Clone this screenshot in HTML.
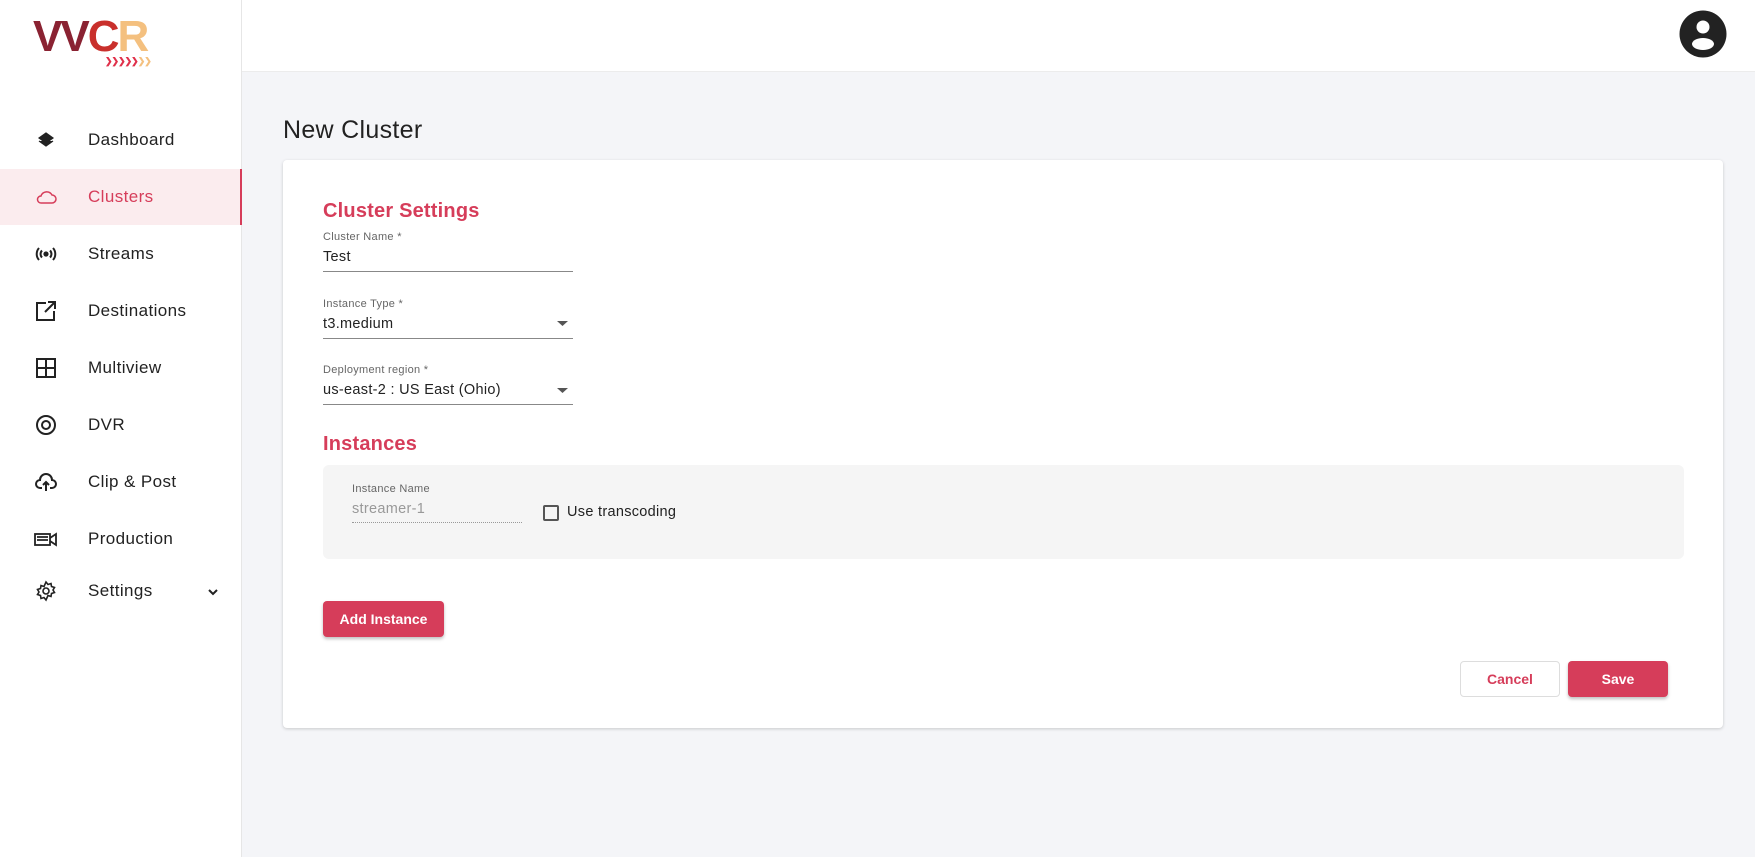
<!DOCTYPE html>
<html><head><meta charset="utf-8"><style>
*{margin:0;padding:0;box-sizing:border-box}
body{width:1755px;height:857px;background:#f4f5f8;font-family:"Liberation Sans",sans-serif;position:relative;overflow:hidden;color:#222}
.side{position:absolute;left:0;top:0;width:242px;height:857px;background:#fff;border-right:1px solid #e6e6e6}
.top{position:absolute;left:242px;top:0;right:0;height:72px;background:#fff;border-bottom:1px solid #ececec}
.nav{position:absolute;left:0;width:242px;height:56px;display:flex;align-items:center;font-size:17px;letter-spacing:.4px;color:#222}
.nav .ic{position:absolute;left:34px;top:16px;width:24px;height:24px}
.nav span{position:absolute;left:88px}
.act{background:#fbecee;color:#d63d5a;border-right:2px solid #d63d5a}
.abs{position:absolute}
.lbl{font-size:11px;color:#666;letter-spacing:.3px}
.val{font-size:14.5px;color:#222;letter-spacing:.3px}
.line{height:1px;background:#888}
h2{position:absolute;font-size:20px;color:#d63d5a;font-weight:bold;letter-spacing:.2px}
.btn{position:absolute;border-radius:4px;font-size:14px;font-weight:bold;display:flex;align-items:center;justify-content:center}
</style></head><body>
<div class="side">
  <div class="abs" style="left:33px;top:15px;font-size:44px;font-weight:900;letter-spacing:-2px;line-height:1"><span style="color:#8a2232">VV</span><span style="color:#c9302c">C</span><span style="color:#f4c07f">R</span></div>
  <div class="abs" style="left:105px;top:56px;font-size:9px;letter-spacing:-1px;color:#e0304a;font-weight:bold">❯❯❯❯❯<span style="color:#f4c07f">❯❯</span></div>
  <div class="nav" style="top:112px"><svg class="ic" viewBox="0 0 24 24"><path d="M12 5l-7 5 7 5 7-5z M5 13l7 5 7-5" fill="#222" stroke="#222" stroke-width="1.2"/></svg><span>Dashboard</span></div>
  <div class="nav act" style="top:169px"><svg class="ic" viewBox="0 0 24 24"><path d="M7 18h11a4 4 0 0 0 0-8 6 6 0 0 0-11 1 3.5 3.5 0 0 0 0 7z" fill="none" stroke="#d63d5a" stroke-width="1.5"/></svg><span>Clusters</span></div>
  <div class="nav" style="top:226px"><svg class="ic" viewBox="0 0 24 24" fill="none" stroke="#222" stroke-width="2"><circle cx="12" cy="12" r="1.6" fill="#222"/><path d="M8 8.5a5 5 0 0 0 0 7M16 8.5a5 5 0 0 1 0 7M5 6a9 9 0 0 0 0 12M19 6a9 9 0 0 1 0 12"/></svg><span>Streams</span></div>
  <div class="nav" style="top:283px"><svg class="ic" viewBox="0 0 24 24" fill="none" stroke="#222" stroke-width="2"><path d="M12 4H3v17h17v-9M14 3h7v7M21 3L11 13"/></svg><span>Destinations</span></div>
  <div class="nav" style="top:340px"><svg class="ic" viewBox="0 0 24 24" fill="none" stroke="#222" stroke-width="2"><rect x="3" y="3" width="18" height="18"/><path d="M12 3v18M3 12h18"/></svg><span>Multiview</span></div>
  <div class="nav" style="top:397px"><svg class="ic" viewBox="0 0 24 24" fill="none" stroke="#222" stroke-width="2"><circle cx="12" cy="12" r="9"/><circle cx="12" cy="12" r="4"/></svg><span>DVR</span></div>
  <div class="nav" style="top:454px"><svg class="ic" viewBox="0 0 24 24" fill="none" stroke="#222" stroke-width="2"><path d="M8 18H6a4 4 0 0 1 0-8 6 6 0 0 1 12 0 4 4 0 0 1 0 8h-2M12 21v-9M9 15l3-3 3 3"/></svg><span>Clip &amp; Post</span></div>
  <div class="nav" style="top:511px"><svg class="ic" viewBox="0 0 24 24" fill="none" stroke="#222" stroke-width="1.8"><rect x="1" y="7" width="15" height="11"/><path d="M3 10h11M3 13h11M16 11l6-4v11l-6-4"/></svg><span>Production</span></div>
  <div class="nav" style="top:563px"><svg class="ic" viewBox="0 0 24 24" fill="none" stroke="#222" stroke-width="1.6"><circle cx="12" cy="12" r="3"/><path d="M12 3l2 2.5 3-1 .5 3 3 1-1.5 2.5 1.5 2.5-3 1-.5 3-3-1L12 21l-2-2.5-3 1-.5-3-3-1L5 13 3.5 10.5l3-1 .5-3 3 1z"/></svg><span>Settings</span><svg class="abs" style="left:206px;top:22px" width="14" height="14" viewBox="0 0 14 14"><path d="M3 5l4 4 4-4" fill="none" stroke="#222" stroke-width="2"/></svg></div>
</div>
<div class="top"><svg class="abs" style="left:1437px;top:10px" width="48" height="48" viewBox="0 0 48 48"><circle cx="24" cy="24" r="23.5" fill="#222"/><circle cx="24" cy="17" r="6.5" fill="#fff"/><ellipse cx="24" cy="34" rx="11" ry="6" fill="#fff"/></svg></div>
<div class="abs" style="left:283px;top:116px;font-size:25px;color:#222;letter-spacing:.3px">New Cluster</div>
<div class="abs" style="left:283px;top:160px;width:1440px;height:568px;background:#fff;border-radius:4px;box-shadow:0 1px 3px rgba(0,0,0,.18)"></div>
<h2 style="left:323px;top:200px">Cluster Settings</h2>
<div class="abs lbl" style="left:323px;top:231px">Cluster Name *</div>
<div class="abs val" style="left:323px;top:249px">Test</div>
<div class="abs line" style="left:323px;top:271px;width:250px"></div>
<div class="abs lbl" style="left:323px;top:298px">Instance Type *</div>
<div class="abs val" style="left:323px;top:316px">t3.medium</div>
<svg class="abs" style="left:557px;top:320px" width="12" height="8"><path d="M0 1h11l-5.5 5z" fill="#555"/></svg>
<div class="abs line" style="left:323px;top:338px;width:250px"></div>
<div class="abs lbl" style="left:323px;top:364px">Deployment region *</div>
<div class="abs val" style="left:323px;top:382px">us-east-2 : US East (Ohio)</div>
<svg class="abs" style="left:557px;top:387px" width="12" height="8"><path d="M0 1h11l-5.5 5z" fill="#555"/></svg>
<div class="abs line" style="left:323px;top:404px;width:250px"></div>
<h2 style="left:323px;top:433px">Instances</h2>
<div class="abs" style="left:323px;top:465px;width:1361px;height:94px;background:#f5f5f5;border-radius:6px"></div>
<div class="abs lbl" style="left:352px;top:483px">Instance Name</div>
<div class="abs val" style="left:352px;top:501px;color:#999">streamer-1</div>
<div class="abs" style="left:352px;top:522px;width:170px;border-top:1px dotted #999"></div>
<div class="abs" style="left:543px;top:505px;width:16px;height:16px;border:2px solid #555;border-radius:2px"></div>
<div class="abs val" style="left:567px;top:504px">Use transcoding</div>
<div class="btn" style="left:323px;top:601px;width:121px;height:36px;background:#d63d5a;color:#fff;box-shadow:0 2px 3px rgba(0,0,0,.25)">Add Instance</div>
<div class="btn" style="left:1460px;top:661px;width:100px;height:36px;background:#fff;color:#d63d5a;border:1px solid #ddd">Cancel</div>
<div class="btn" style="left:1568px;top:661px;width:100px;height:36px;background:#d63d5a;color:#fff;box-shadow:0 2px 3px rgba(0,0,0,.25)">Save</div>
</body></html>
